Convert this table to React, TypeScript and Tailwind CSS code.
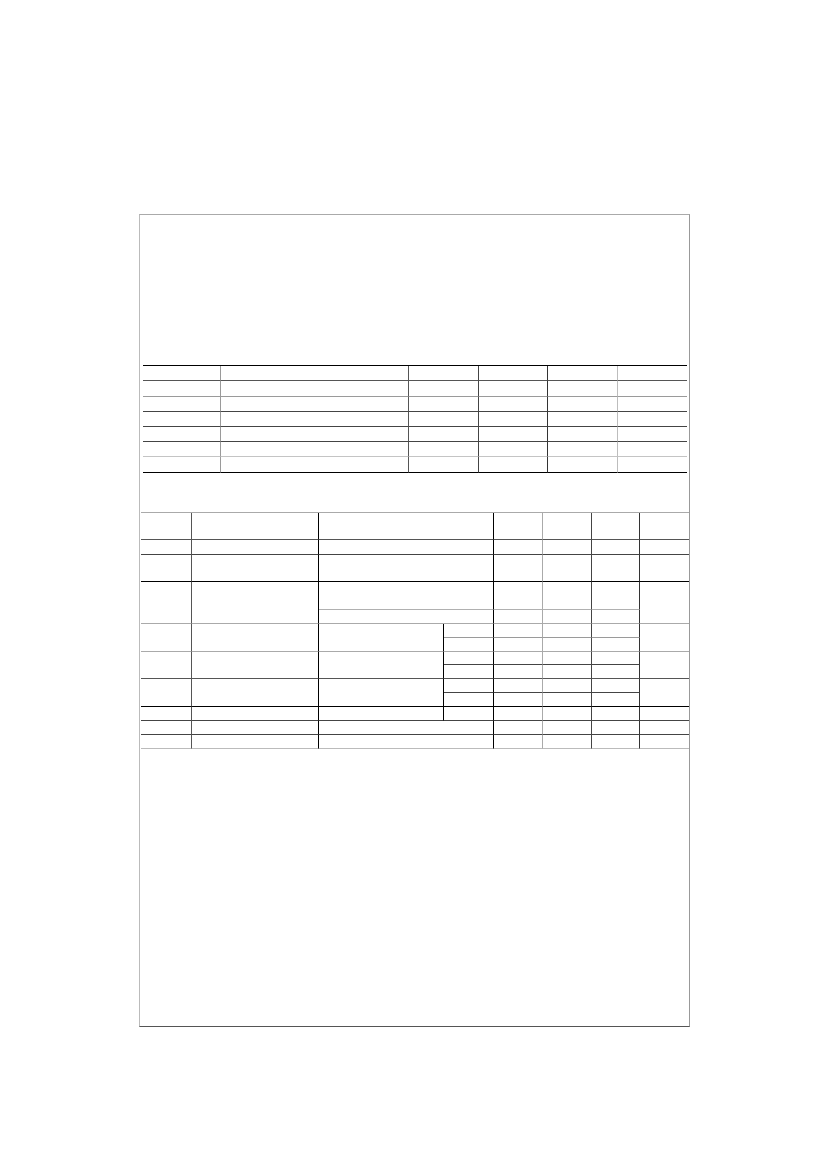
import React from "react";

const CS = ["", "col-start-1", "col-start-2", "col-start-3", "col-start-4", "col-start-5", "col-start-6", "col-start-7", "col-start-8"];
const RS = ["", "row-start-1", "row-start-2", "row-start-3", "row-start-4", "row-start-5", "row-start-6", "row-start-7", "row-start-8", "row-start-9", "row-start-10", "row-start-11", "row-start-12", "row-start-13", "row-start-14"];
const CSPAN = ["", "col-span-1", "col-span-2"];
const RSPAN = ["", "row-span-1", "row-span-2"];

// Table 1 line colours
const T1_RIGHT = ["", "border-r border-r-[#9a9a9a]", "border-r border-r-[#555]", "border-r border-r-[#444]", "border-r border-r-[#333]", "border-r border-r-[#bdbdbd]", ""];
const T1_BOTTOM = ["", "border-b border-b-[#555]", "border-b border-b-[#9a9a9a]", "border-b border-b-[#444]", "border-b border-b-[#444]", "border-b border-b-[#444]", "border-b border-b-[#c4c4c4]", "border-b border-b-black"];

// Table 2 line colours
const T2_RIGHT = ["", "border-r border-r-[#555]", "border-r border-r-black", "border-r border-r-black", "border-r border-r-black", "border-r border-r-[#aaa]", "border-r border-r-[#444]", "border-r border-r-[#333]", ""];
const T2_BOTTOM = ["", "border-b border-b-[#555]", "border-b border-b-[#444]", "border-b border-b-black", "border-b border-b-[#b0b0b0]", "border-b border-b-[#aaa]", "border-b border-b-[#9a9a9a]", "border-b border-b-[#aaa]", "border-b border-b-[#444]", "border-b border-b-[#555]", "border-b border-b-[#444]", "border-b border-b-black", "border-b border-b-[#444]", "border-b border-b-[#444]", "border-b border-b-[#bbb]"];

type C = { c: number; r: number; cs?: number; rs?: number };

function table2Cells(): C[] {
  const cells: C[] = [];
  // rows 1-3: c1, c2, c3-4, c5..c8
  for (let r = 1; r <= 3; r++) {
    cells.push({ c: 1, r }, { c: 2, r }, { c: 3, r, cs: 2 }, { c: 5, r }, { c: 6, r }, { c: 7, r }, { c: 8, r });
  }
  // rows 4-5
  cells.push({ c: 1, r: 4, rs: 2 }, { c: 2, r: 4, rs: 2 }, { c: 8, r: 4, rs: 2 });
  for (const r of [4, 5]) {
    cells.push({ c: 3, r, cs: 2 }, { c: 5, r }, { c: 6, r }, { c: 7, r });
  }
  // rows 6-11 in pairs
  for (const r0 of [6, 8, 10]) {
    cells.push({ c: 1, r: r0, rs: 2 }, { c: 2, r: r0, rs: 2 }, { c: 3, r: r0, rs: 2 }, { c: 8, r: r0, rs: 2 });
    for (const r of [r0, r0 + 1]) {
      cells.push({ c: 4, r }, { c: 5, r }, { c: 6, r }, { c: 7, r });
    }
  }
  // row 12
  for (let c = 1; c <= 8; c++) cells.push({ c, r: 12 });
  // rows 13-14
  for (const r of [13, 14]) {
    cells.push({ c: 1, r }, { c: 2, r }, { c: 3, r, cs: 2 }, { c: 5, r }, { c: 6, r }, { c: 7, r }, { c: 8, r });
  }
  return cells;
}

function Table1() {
  const cells: React.ReactNode[] = [];
  for (let r = 1; r <= 7; r++) {
    for (let c = 1; c <= 6; c++) {
      cells.push(
        <div key={`${r}-${c}`} className={`${T1_RIGHT[c]} ${T1_BOTTOM[r]}`} />
      );
    }
  }
  return (
    <div className="ml-[3px] grid w-[544px] grid-cols-[78px_188px_70px_69px_70px_69px] grid-rows-[15px_16px_15px_15px_15px_15px_16px] border-t border-t-black">
      {cells}
    </div>
  );
}

function Table2() {
  const cells = table2Cells();
  return (
    <div className="ml-[1px] mt-[39px] grid w-[548px] grid-cols-[51px_127px_125px_50px_49px_49px_48px_49px] grid-rows-[27px_15px_27px_28px_14px_14px_14px_13px_14px_14px_14px_14px_14px_14px] border-t border-t-[#aaa]">
      {cells.map((cell, i) => {
        const cs = cell.cs ?? 1;
        const rs = cell.rs ?? 1;
        const endC = cell.c + cs - 1;
        const endR = cell.r + rs - 1;
        return (
          <div
            key={i}
            className={`${CS[cell.c]} ${CSPAN[cs]} ${RS[cell.r]} ${RSPAN[rs]} ${T2_RIGHT[endC]} ${T2_BOTTOM[endR]}`}
          />
        );
      })}
    </div>
  );
}

export default function App() {
  return (
    <div className="h-[1169px] w-[826px] bg-white pl-[139px] pt-[214px] font-['Liberation_Sans',sans-serif]">
      <div className="h-[813px] w-[551px] border border-t-[#aaa] border-l-[#bbb] border-r-[#999] border-b-[#555]">
        <div className="h-[150px]" />
        <Table1 />
        <Table2 />
      </div>
    </div>
  );
}
